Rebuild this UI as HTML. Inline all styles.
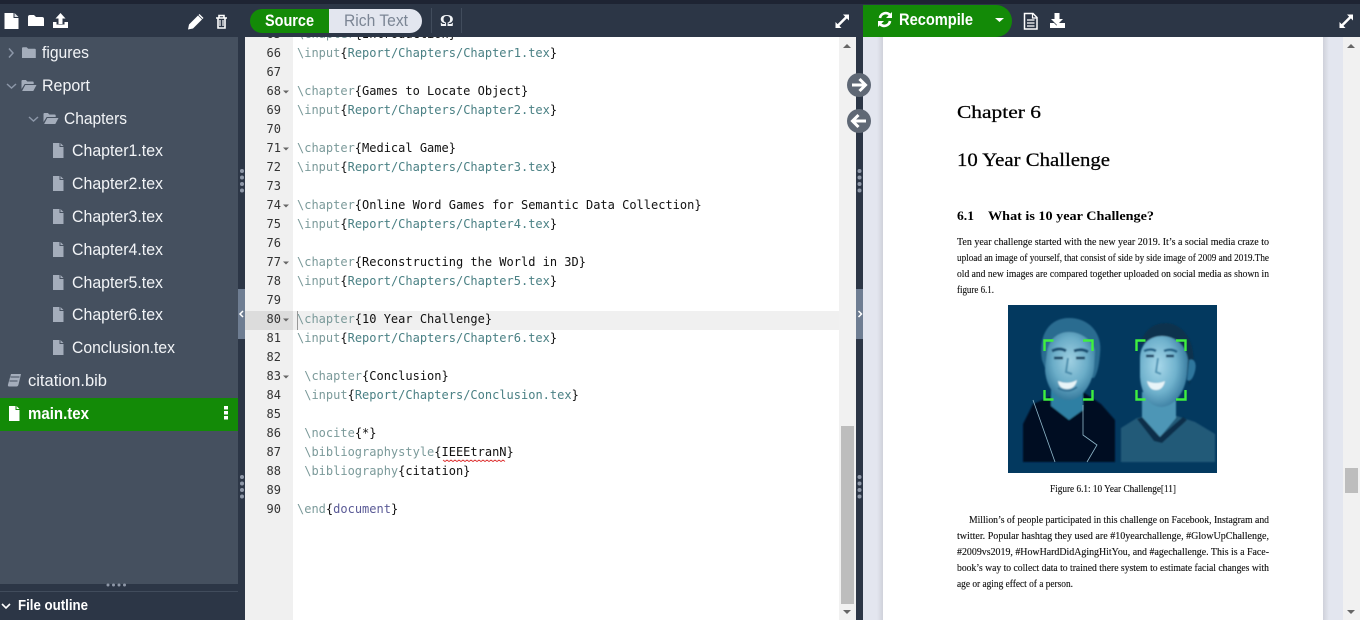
<!DOCTYPE html>
<html><head><meta charset="utf-8">
<style>
html,body{margin:0;padding:0;width:1360px;height:620px;overflow:hidden;background:#2c3646}
.a{position:absolute}
pre{margin:0;font:12px/19px "DejaVu Sans Mono","Liberation Mono",monospace}
#code{top:25px;color:#111;white-space:pre}
#code i{font-style:normal;color:#7b9a9a}
#code b{font-weight:normal;color:#4a8084}
#code u{text-decoration:none;color:#5a5a96}
#nums{top:25px;width:36px;text-align:right;color:#333}
svg{position:absolute;left:0;top:0}
.s{font-family:"Liberation Sans",sans-serif;font-size:17px;fill:#f2f4f7}
.p{font-family:"Liberation Serif",serif;font-size:10px;fill:#111;stroke:#111;stroke-width:.12px}
</style></head><body>
<div class="a" style="left:0;top:0;width:1360px;height:4px;background:#1e2433"></div>
<div class="a" style="left:0;top:37px;width:238px;height:547px;background:#45505f"></div>
<div class="a" style="left:0;top:398px;width:238px;height:33px;background:#138a07"></div>
<div class="a" style="left:245px;top:37px;width:48px;height:583px;background:#f0f0f0"></div>
<div class="a" style="left:293px;top:37px;width:546px;height:583px;background:#fff"></div>
<div class="a" style="left:245px;top:311px;width:48px;height:19px;background:#dcdcdc"></div>
<div class="a" style="left:293px;top:311px;width:546px;height:19px;background:#f0f0f0"></div>
<div class="a" style="left:297px;top:311px;width:1px;height:19px;background:#999"></div>
<div class="a" style="left:839px;top:37px;width:17px;height:583px;background:#f1f1f1"></div>
<div class="a" style="left:841px;top:426px;width:13px;height:178px;background:#bdbdbd"></div>
<div class="a" style="left:863px;top:37px;width:20px;height:583px;background:linear-gradient(90deg,#e3e6ef 0,#e3e6ef 14px,#cfd1da 20px)"></div>
<div class="a" style="left:883px;top:37px;width:440px;height:583px;background:#fff"></div>
<div class="a" style="left:1323px;top:37px;width:20px;height:583px;background:linear-gradient(90deg,#cfd1da 0,#e3e6ef 6px,#e3e6ef 100%)"></div>
<div class="a" style="left:1343px;top:37px;width:17px;height:583px;background:#f1f1f1"></div>
<div class="a" style="left:1345px;top:468px;width:13px;height:25px;background:#bdbdbd"></div>

<div class="a" style="left:245px;top:37px;width:594px;height:583px;overflow:hidden"><div style="position:absolute;left:0;top:-37px;width:594px;height:620px">
<pre class="a" id="nums" style="left:0">65
66
67
68
69
70
71
72
73
74
75
76
77
78
79
80
81
82
83
84
85
86
87
88
89
90</pre>
<pre class="a" id="code" style="left:52px"><i>\chapter</i>{Introduction}
<i>\input</i>{<b>Report/Chapters/Chapter1.tex</b>}

<i>\chapter</i>{Games to Locate Object}
<i>\input</i>{<b>Report/Chapters/Chapter2.tex</b>}

<i>\chapter</i>{Medical Game}
<i>\input</i>{<b>Report/Chapters/Chapter3.tex</b>}

<i>\chapter</i>{Online Word Games for Semantic Data Collection}
<i>\input</i>{<b>Report/Chapters/Chapter4.tex</b>}

<i>\chapter</i>{Reconstructing the World in 3D}
<i>\input</i>{<b>Report/Chapters/Chapter5.tex</b>}

<i>\chapter</i>{10 Year Challenge}
<i>\input</i>{<b>Report/Chapters/Chapter6.tex</b>}

 <i>\chapter</i>{Conclusion}
 <i>\input</i>{<b>Report/Chapters/Conclusion.tex</b>}

 <i>\nocite</i>{*}
 <i>\bibliographystyle</i>{IEEEtranN}
 <i>\bibliography</i>{citation}

<i>\end</i>{<u>document</u>}</pre>
</div></div>

<svg width="1360" height="620" viewBox="0 0 1360 620">
<defs>
<path id="f" d="M0 0h6.500v4h4v11H0zM7.500 0l3 3h-3z"/>
<path id="fo" d="M0 2.200q0-1 1-1h3.600l1.600 1.600h6.600q1 0 1 1V12H0z"/>
<path id="op" d="M0 2q0-1 1-1h3.400l1.400 1.500h5.400q1 0 1 1V5H3.200L0 10zM3.800 6H15l-3.200 6H.6z"/>
<g id="ex" fill="#fff"><path d="M-6.500 7 -6.500 1 -4.400 3.100 3.100-4.400 1-6.500H7V-.5L4.900-2.600-2.600 4.900-.5 7z"/></g>
<filter id="soft" x="-5%" y="-5%" width="110%" height="110%"><feGaussianBlur stdDeviation="0.7"/></filter>
<filter id="t" x="-2%" y="-20%" width="104%" height="140%"><feGaussianBlur stdDeviation="0.22"/></filter>
<radialGradient id="fa" cx=".5" cy=".42" r=".62"><stop offset="0" stop-color="#9fd0e2"/><stop offset=".55" stop-color="#6badc8"/><stop offset="1" stop-color="#2f7397"/></radialGradient>
<radialGradient id="fb" cx=".38" cy=".42" r=".68"><stop offset="0" stop-color="#a8d8ea"/><stop offset=".55" stop-color="#70b2cd"/><stop offset="1" stop-color="#2d7096"/></radialGradient>
<clipPath id="im"><rect x="1008" y="305" width="209" height="168"/></clipPath>
</defs>

<!-- top bar icons -->
<g fill="#fff">
<path d="M4.500 13h9v5h5v11h-14z"/><path d="M14.500 13l4 4h-4z" fill="#dfe3e8"/>
<path d="M28 17q0-2 2-2h4l2 2h6q2 0 2 2v7H28z"/>
<path d="M60.500 13l5 5.500h-3v5.500h-4v-5.500h-3zM53 22h3.500v2.500h8V22H68v6H53z"/>
<path d="M198 15.500l4 4-9 9-5 1 1-5z"/><path d="M199.500 14l4 4 -1 1-4-4z"/>
</g>
<g fill="none" stroke="#fff" stroke-width="1.600"><path d="M216 18h11M218 18v10h7V18M219 18v-2.500h5V18"/></g>
<path d="M220 20v6M223 20v6" stroke="#fff" stroke-width="1.200"/>

<!-- toggle -->
<path d="M329 9H262a12 12 0 0 0 0 24h67z" fill="#138a07"/>
<path d="M329 9h81a12 12 0 0 1 0 24h-81z" fill="#e3e6ef"/>
<text class="s" x="265" y="26" textLength="49" lengthAdjust="spacingAndGlyphs" style="font-weight:700;fill:#fff">Source</text>
<text class="s" x="344" y="26" textLength="64" lengthAdjust="spacingAndGlyphs" style="fill:#7b8594">Rich Text</text>
<path d="M431.500 8v25M461.500 8v25" stroke="#414c5c"/>
<text x="440" y="26" style="font:700 17px 'Liberation Serif',serif;fill:#f2f4f7">Ω</text>
<use href="#ex" transform="translate(842 21)"/>
<use href="#ex" transform="translate(1346 21)"/>

<!-- recompile -->
<path d="M863 5h133a16 16 0 0 1 0 32H863z" fill="#138a07"/>
<g fill="none" stroke="#fff" stroke-width="2.600"><path d="M880 18a5.800 5.800 0 0 1 10-3"/><path d="M890 21a5.800 5.800 0 0 1-10 3"/></g>
<path d="M892 12v6h-6zM878 27v-6h6z" fill="#fff"/>
<text class="s" x="899" y="25" textLength="74" lengthAdjust="spacingAndGlyphs" style="font-weight:700;fill:#fff">Recompile</text>
<path d="M995 18h9l-4.500 4z" fill="#fff"/>
<path d="M1024.500 13.500h8.500l4 4v11.500h-12.500z" fill="none" stroke="#fff" stroke-width="1.500"/>
<path d="M1027 20h7.500M1027 23h7.500M1027 26h7.500M1032.500 14v4h4" stroke="#fff" fill="none" stroke-width="1.200"/>
<path d="M1054.500 13h5v6h3.500l-6 6-6-6h3.500zM1050 23h4l2.500 2.500 2.500-2.500h6v5h-15z" fill="#fff"/>

<!-- sidebar -->
<g fill="none" stroke="#8c97a8" stroke-width="1.500">
<path d="M9 48.500l4 4.500-4 4.500"/><path d="M7 84l4.500 4 4.500-4"/><path d="M29 117l4.500 4 4.500-4"/>
</g>
<use href="#fo" x="22" y="46" fill="#a4adbb"/>
<use href="#op" x="21.500" y="79" fill="#a4adbb"/>
<use href="#op" x="43.500" y="112" fill="#a4adbb"/>
<g fill="#a4adbb">
<use href="#f" x="53" y="143"/><use href="#f" x="53" y="176"/><use href="#f" x="53" y="209"/><use href="#f" x="53" y="242"/><use href="#f" x="53" y="275"/><use href="#f" x="53" y="307"/><use href="#f" x="53" y="340"/>
<path d="M11 374h10l-2.500 10.500q-.5 2-2 2H9q-1.500 0-1-2z"/>
</g>
<path d="M10.500 377h9M9.500 381h8" stroke="#45505f" stroke-width="1"/>
<use href="#f" x="9" y="406" fill="#fff"/>
<rect x="224" y="406" width="4" height="3.500" fill="#fff"/><rect x="224" y="411" width="4" height="3.500" fill="#fff"/><rect x="224" y="416" width="4" height="3.500" fill="#fff"/>
<g>
<text class="s" x="42" y="58" textLength="47" lengthAdjust="spacingAndGlyphs">figures</text>
<text class="s" x="42" y="91" textLength="48" lengthAdjust="spacingAndGlyphs">Report</text>
<text class="s" x="64" y="124" textLength="63" lengthAdjust="spacingAndGlyphs">Chapters</text>
<text class="s" x="72" y="156" textLength="91" lengthAdjust="spacingAndGlyphs">Chapter1.tex</text>
<text class="s" x="72" y="189" textLength="91" lengthAdjust="spacingAndGlyphs">Chapter2.tex</text>
<text class="s" x="72" y="222" textLength="91" lengthAdjust="spacingAndGlyphs">Chapter3.tex</text>
<text class="s" x="72" y="255" textLength="91" lengthAdjust="spacingAndGlyphs">Chapter4.tex</text>
<text class="s" x="72" y="288" textLength="91" lengthAdjust="spacingAndGlyphs">Chapter5.tex</text>
<text class="s" x="72" y="320" textLength="91" lengthAdjust="spacingAndGlyphs">Chapter6.tex</text>
<text class="s" x="72" y="353" textLength="103" lengthAdjust="spacingAndGlyphs">Conclusion.tex</text>
<text class="s" x="28" y="386" textLength="79" lengthAdjust="spacingAndGlyphs">citation.bib</text>
<text class="s" x="28" y="419" textLength="61" lengthAdjust="spacingAndGlyphs" style="font-weight:700;fill:#fff">main.tex</text>
</g>
<path d="M0 591.500h238" stroke="#414c5c"/>
<path d="M2 604l4 4 4-4" fill="none" stroke="#fff" stroke-width="1.600"/>
<text class="s" x="18" y="610" textLength="70" lengthAdjust="spacingAndGlyphs" style="font-weight:700;font-size:15px;fill:#fff">File outline</text>
<g fill="#8f98a8">
<circle cx="108" cy="585" r="1.500"/><circle cx="113.500" cy="585" r="1.500"/><circle cx="119" cy="585" r="1.500"/><circle cx="124.500" cy="585" r="1.500"/>
<circle cx="242" cy="477" r="2"/><circle cx="242" cy="483.500" r="2"/><circle cx="242" cy="490" r="2"/><circle cx="242" cy="496.500" r="2"/>
<circle cx="242" cy="171" r="2"/><circle cx="242" cy="177.500" r="2"/><circle cx="242" cy="184" r="2"/><circle cx="242" cy="190.500" r="2"/>
<circle cx="859.500" cy="477" r="2"/><circle cx="859.500" cy="483.500" r="2"/><circle cx="859.500" cy="490" r="2"/><circle cx="859.500" cy="496.500" r="2"/>
<circle cx="859.500" cy="171" r="2"/><circle cx="859.500" cy="177.500" r="2"/><circle cx="859.500" cy="184" r="2"/><circle cx="859.500" cy="190.500" r="2"/>
</g>
<rect x="238" y="289" width="7" height="50" fill="#6e7d92"/>
<path d="M243 311l-3 3 3 3" fill="none" stroke="#fff" stroke-width="1.500"/>
<rect x="856" y="289" width="7" height="50" fill="#6e7d92"/>
<path d="M858.500 311l3 3-3 3" fill="none" stroke="#fff" stroke-width="1.500"/>

<!-- fold arrows -->
<g fill="#666">
<path d="M283 90.500h6l-3 3z"/><path d="M283 147.500h6l-3 3z"/><path d="M283 204.500h6l-3 3z"/><path d="M283 261.500h6l-3 3z"/><path d="M283 318.500h6l-3 3z"/><path d="M283 375.500h6l-3 3z"/>
<path d="M843 48l4-4 4 4z"/><path d="M843 610l4 4 4-4z"/>
<path d="M1347 48l4-4 4 4z"/><path d="M1347 610l4 4 4-4z"/>
</g>
<path d="M443 460l2 1.500 2-1.500 2 1.500 2-1.500 2 1.500 2-1.500 2 1.500 2-1.500 2 1.500 2-1.500 2 1.500 2-1.500 2 1.500 2-1.500 2 1.500 2-1.500 2 1.500 2-1.500 2 1.500 2-1.500 2 1.500 2-1.500 2 1.500 2-1.500 2 1.500 2-1.500 2 1.500 2-1.500 2 1.500 2-1.500 2 1.500" fill="none" stroke="#d33" stroke-width=".9"/>

<!-- round buttons -->
<circle cx="859" cy="85" r="12" fill="#5f6875"/><circle cx="859" cy="121" r="12" fill="#5f6875"/>
<path d="M852 85h12M859.500 79l6 6-6 6" fill="none" stroke="#fff" stroke-width="3"/>
<path d="M866 121h-12M858.500 115l-6 6 6 6" fill="none" stroke="#fff" stroke-width="3"/>

<!-- pdf -->
<g filter="url(#t)">
<text x="957" y="118" textLength="84" lengthAdjust="spacingAndGlyphs" style="font:18px 'Liberation Serif',serif;fill:#000;stroke:#000;stroke-width:.25px">Chapter 6</text>
<text x="957" y="166" textLength="153" lengthAdjust="spacingAndGlyphs" style="font:19px 'Liberation Serif',serif;fill:#000;stroke:#000;stroke-width:.25px">10 Year Challenge</text>
<text x="957" y="220" textLength="17" lengthAdjust="spacingAndGlyphs" style="font:700 13px 'Liberation Serif',serif;fill:#000">6.1</text>
<text x="988" y="220" textLength="166" lengthAdjust="spacingAndGlyphs" style="font:700 13px 'Liberation Serif',serif;fill:#000">What is 10 year Challenge?</text>
<text class="p" x="957" y="245" textLength="312" lengthAdjust="spacingAndGlyphs">Ten year challenge started with the new year 2019.  It’s a social media craze to</text>
<text class="p" x="957" y="261" textLength="312" lengthAdjust="spacingAndGlyphs">upload an image of yourself, that consist of side by side image of 2009 and 2019.The</text>
<text class="p" x="957" y="277" textLength="312" lengthAdjust="spacingAndGlyphs">old and new images are compared together uploaded on social media as shown in</text>
<text class="p" x="957" y="293" textLength="37" lengthAdjust="spacingAndGlyphs">figure 6.1.</text>
<text class="p" x="1050" y="492" textLength="126" lengthAdjust="spacingAndGlyphs">Figure 6.1: 10 Year Challenge[11]</text>
<text class="p" x="969" y="523" textLength="300" lengthAdjust="spacingAndGlyphs">Million’s of people participated in this challenge on Facebook, Instagram and</text>
<text class="p" x="957" y="539" textLength="312" lengthAdjust="spacingAndGlyphs">twitter.  Popular hashtag they used are #10yearchallenge, #GlowUpChallenge,</text>
<text class="p" x="957" y="555" textLength="312" lengthAdjust="spacingAndGlyphs">#2009vs2019, #HowHardDidAgingHitYou, and #agechallenge.  This is a Face-</text>
<text class="p" x="957" y="571" textLength="312" lengthAdjust="spacingAndGlyphs">book’s way to collect data to trained there system to estimate facial changes with</text>
<text class="p" x="957" y="587" textLength="116" lengthAdjust="spacingAndGlyphs">age or aging effect of a person.</text>
</g>

<!-- figure -->
<rect x="1008" y="305" width="209" height="168" fill="#03395f"/>
<g clip-path="url(#im)"><g filter="url(#soft)">
<!-- left person -->
<path d="M1023 462V424l10-20 14-6 12-6h24l18 12 14 16 0 42z" fill="#030f22"/>
<path d="M1051 390h32v20l-14 10-18-14z" fill="#2f7fa3"/>
<path d="M1042 360c-4-26 8-42 27-42s34 14 31 36c-1 12-3 20-6 24l-46-2z" fill="#2a6c90"/>
<path d="M1047 352c2-14 12-20 22-20s22 6 26 18l-1 18c-2 18-13 32-26 32s-22-14-23-30z" fill="url(#fa)"/>
<path d="M1052 351q8-4 14 0M1074 351q8-3 14 1" stroke="#174e70" stroke-width="3" fill="none"/>
<path d="M1054 358h9M1076 358h9" stroke="#103c5c" stroke-width="2.500"/>
<path d="M1068 358l-2 14 6 2" stroke="#4a8cab" stroke-width="2" fill="none"/>
<path d="M1058 381q10 4 19-1-2 9-10 9t-9-8z" fill="#e8f4f8"/>
<path d="M1058 388q10 6 19-1" stroke="#2c6a8e" stroke-width="1.500" fill="none"/>
<!-- right person -->
<path d="M1121 462v-34l16-10 10-2 30 0 18 6 20 12v28z" fill="#225a78"/>
<path d="M1137 419l17 22 8 2 25-23 -4-3-21 18-19-18z" fill="#0a2f49"/>
<path d="M1142 392h34v26l-16 19-18-20z" fill="#4d96b6"/>
<path d="M1140 345c4-16 14-22 26-22s24 10 27 28l2 20-6 14-4-32-10-14-20 0z" fill="#08304e"/>
<path d="M1140 358c0-14 10-22 22-22s24 8 26 24l-1 14c-2 20-14 33-26 33s-20-14-21-30z" fill="url(#fb)"/>
<path d="M1189 360c5-2 8 3 6 11s-5 11-8 9z" fill="#2f769c"/>
<path d="M1144 351q7-3 12 0M1164 351q7-3 13 1" stroke="#1f5f84" stroke-width="2.500" fill="none"/>
<path d="M1146 356h8M1166 356h8" stroke="#123f60" stroke-width="2.500"/>
<path d="M1158 358l-2 14 5 2" stroke="#4f93b2" stroke-width="2" fill="none"/>
<path d="M1147 381q9 4 18 0-2 9-9 9t-9-9z" fill="#e8f4f8"/>
</g>
<path d="M1033 400l22 62M1083 405v30l14 10-10 17" fill="none" stroke="#8fb8cb" stroke-width=".8"/>
</g>
<g fill="none" stroke="#3ff03f" stroke-width="2.400">
<path d="M1044.500 351v-10.500h9M1083 340.500h9.500v10.500M1044.500 390v9.500h9M1083 399.500h9.500V390"/>
<path d="M1136.500 351v-10.500h9M1176 340.500h9.500v10.500M1136.500 390v9.500h9M1176 399.500h9.500V390"/>
</g>
</svg>
</body></html>
